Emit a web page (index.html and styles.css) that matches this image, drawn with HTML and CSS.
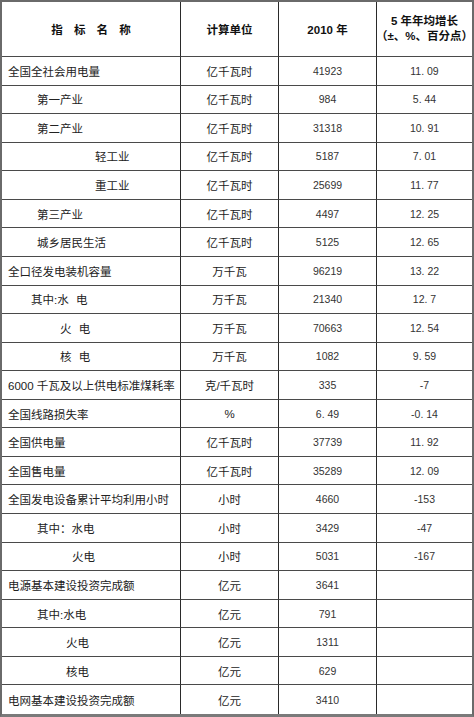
FILE: index.html
```html
<!DOCTYPE html>
<html lang="zh">
<head>
<meta charset="utf-8">
<title>2010年电力统计</title>
<link rel="stylesheet" href="styles.css">
</head>
<body>
<div class="sheet">
  <div class="cell head"><span class="spaced">指 标 名 称</span></div>
  <div class="cell head c">计算单位</div>
  <div class="cell head c">2010 年</div>
  <div class="cell head c last two"><span>5 年年均增长</span><span>（±、%、百分点）</span></div>

  <div class="cell lbl i0">全国全社会用电量</div><div class="cell c">亿千瓦时</div><div class="cell c num">41923</div><div class="cell c num last">11. 09</div>
  <div class="cell lbl i1">第一产业</div><div class="cell c">亿千瓦时</div><div class="cell c num">984</div><div class="cell c num last">5. 44</div>
  <div class="cell lbl i1">第二产业</div><div class="cell c">亿千瓦时</div><div class="cell c num">31318</div><div class="cell c num last">10. 91</div>
  <div class="cell lbl i2">轻工业</div><div class="cell c">亿千瓦时</div><div class="cell c num">5187</div><div class="cell c num last">7. 01</div>
  <div class="cell lbl i2">重工业</div><div class="cell c">亿千瓦时</div><div class="cell c num">25699</div><div class="cell c num last">11. 77</div>
  <div class="cell lbl i1">第三产业</div><div class="cell c">亿千瓦时</div><div class="cell c num">4497</div><div class="cell c num last">12. 25</div>
  <div class="cell lbl i1">城乡居民生活</div><div class="cell c">亿千瓦时</div><div class="cell c num">5125</div><div class="cell c num last">12. 65</div>
  <div class="cell lbl i0">全口径发电装机容量</div><div class="cell c">万千瓦</div><div class="cell c num">96219</div><div class="cell c num last">13. 22</div>
  <div class="cell lbl i1a">其中:水 电</div><div class="cell c">万千瓦</div><div class="cell c num">21340</div><div class="cell c num last">12. 7</div>
  <div class="cell lbl i1b">火 电</div><div class="cell c">万千瓦</div><div class="cell c num">70663</div><div class="cell c num last">12. 54</div>
  <div class="cell lbl i1b">核 电</div><div class="cell c">万千瓦</div><div class="cell c num">1082</div><div class="cell c num last">9. 59</div>
  <div class="cell lbl i0">6000 千瓦及以上供电标准煤耗率</div><div class="cell c">克/千瓦时</div><div class="cell c num">335</div><div class="cell c num last">-7</div>
  <div class="cell lbl i0">全国线路损失率</div><div class="cell c">%</div><div class="cell c num">6. 49</div><div class="cell c num last">-0. 14</div>
  <div class="cell lbl i0">全国供电量</div><div class="cell c">亿千瓦时</div><div class="cell c num">37739</div><div class="cell c num last">11. 92</div>
  <div class="cell lbl i0">全国售电量</div><div class="cell c">亿千瓦时</div><div class="cell c num">35289</div><div class="cell c num last">12. 09</div>
  <div class="cell lbl i0">全国发电设备累计平均利用小时</div><div class="cell c">小时</div><div class="cell c num">4660</div><div class="cell c num last">-153</div>
  <div class="cell lbl i1">其中：水电</div><div class="cell c">小时</div><div class="cell c num">3429</div><div class="cell c num last">-47</div>
  <div class="cell lbl i2b">火电</div><div class="cell c">小时</div><div class="cell c num">5031</div><div class="cell c num last">-167</div>
  <div class="cell lbl i0">电源基本建设投资完成额</div><div class="cell c">亿元</div><div class="cell c num">3641</div><div class="cell c num last"></div>
  <div class="cell lbl i1">其中:水电</div><div class="cell c">亿元</div><div class="cell c num">791</div><div class="cell c num last"></div>
  <div class="cell lbl i2c">火电</div><div class="cell c">亿元</div><div class="cell c num">1311</div><div class="cell c num last"></div>
  <div class="cell lbl i2c">核电</div><div class="cell c">亿元</div><div class="cell c num">629</div><div class="cell c num last"></div>
  <div class="cell lbl i0 bottom">电网基本建设投资完成额</div><div class="cell c bottom">亿元</div><div class="cell c num bottom">3410</div><div class="cell c num last bottom"></div>
</div>
</body>
</html>
```
FILE: styles.css
```css
html, body {
  margin: 0;
  padding: 0;
  background: #fff;
}
.sheet {
  box-sizing: border-box;
  width: 474px;
  height: 717px;
  display: grid;
  grid-template-columns: 179px 98px 98px 1fr;
  grid-template-rows: 55px repeat(23, 1fr);
  border-top: 2px solid #6a6a6a;
  border-left: 2px solid #6a6a6a;
  border-right: 2px solid #6a6a6a;
  border-bottom: 3px solid #7a7a7a;
  font-family: "Liberation Sans", "Noto Sans CJK SC", sans-serif;
  font-size: 11.5px;
  color: #222;
}
.cell {
  display: flex;
  align-items: center;
  border-right: 1px solid #2a2a2a;
  border-bottom: 1px solid #4a4a4a;
  white-space: nowrap;
  overflow: hidden;
}
.cell.last { border-right: none; }
.cell.bottom { border-bottom: none; }
.c { justify-content: center; }
.head {
  font-weight: bold;
  font-size: 11.5px;
  color: #111;
  justify-content: center;
}
.spaced { letter-spacing: 4px; margin-left: 4px; }
.two {
  flex-direction: column;
  justify-content: center;
  line-height: 15px;
}
.num {
  font-size: 10.5px;
  color: #333;
}
.lbl { padding-left: 6px; }
.i1 { padding-left: 35px; }
.i2 { padding-left: 93px; }
.i1a { padding-left: 29px; word-spacing: 4px; }
.i1b { padding-left: 58px; word-spacing: 4px; }
.i2b { padding-left: 70px; }
.i2c { padding-left: 64px; }
```
